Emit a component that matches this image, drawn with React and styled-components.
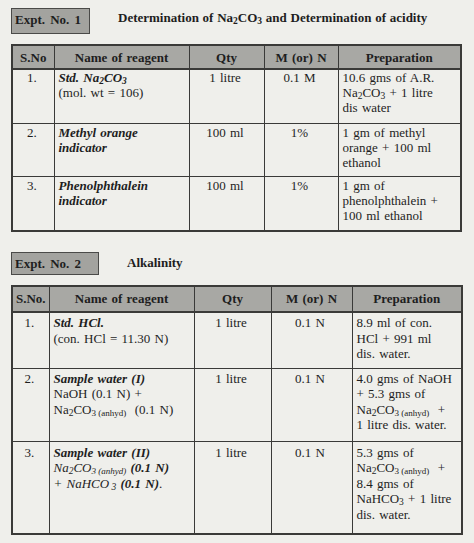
import React from "react";
import styled, { createGlobalStyle } from "styled-components";

const Global = createGlobalStyle`
  html, body { margin: 0; padding: 0; background: #efefeb; }
  body { font-family: "Liberation Serif", "Times New Roman", serif; color: #1e1e1e; }
`;

const Page = styled.div`
  width: 474px;
  height: 543px;
  box-sizing: border-box;
  padding: 8px 0 0 11px;
  background: #efefeb;
`;

const Heading = styled.div`
  display: flex;
  align-items: flex-start;
  gap: ${(p) => p.$gap}px;
  margin-top: ${(p) => p.$mt}px;
`;

const ExptBox = styled.div`
  box-sizing: border-box;
  width: ${(p) => p.$w}px;
  height: ${(p) => p.$h}px;
  background: #a3a39f;
  border: 1.5px solid #4a4a48;
  padding: ${(p) => p.$pt}px 0 0 3px;
  font-weight: bold;
  font-size: 13px;
  line-height: 15px;
  word-spacing: 2px;
`;

const Title = styled.div`
  font-weight: bold;
  font-size: 13px;
  line-height: 15px;
  padding-top: ${(p) => p.$pt}px;
  word-spacing: 0.5px;
`;

const Table = styled.table`
  border-collapse: collapse;
  table-layout: fixed;
  width: ${(p) => p.$w}px;
  margin-top: 10px;
  border: 2px solid #3a3a38;
  font-size: 13px;
  line-height: ${(p) => p.$lh}px;
  word-spacing: 1px;
`;

const Col = styled.col`
  width: ${(p) => p.$w}px;
`;

const HeadCell = styled.th`
  background: #a8a8a4;
  border: 1.5px solid #3a3a38;
  border-bottom-width: 2px;
  height: ${(p) => p.$h}px;
  padding: 0;
  font-weight: bold;
  text-align: center;
  vertical-align: middle;
  box-sizing: border-box;
`;

const Cell = styled.td`
  border: 1.5px solid #3a3a38;
  height: ${(p) => p.$h}px;
  padding: ${(p) => p.$pt}px 3px 0 ${(p) => (p.$center ? 0 : 4)}px;
  text-align: ${(p) => (p.$center ? "center" : "left")};
  vertical-align: top;
  box-sizing: border-box;
`;

const BI = styled.span`
  font-weight: bold;
  font-style: italic;
`;

const I = styled.span`
  font-style: italic;
`;

const Sub = styled.span`
  font-size: ${(p) => (p.$small ? 9 : 9.5)}px;
  line-height: 0;
  position: relative;
  top: 2px;
  word-spacing: 0;
`;

const HEAD = ["Name of reagent", "Qty", "M (or) N", "Preparation"];

function Header({ sno, h }) {
  return (
    <thead>
      <tr>
        <HeadCell $h={h}>{sno}</HeadCell>
        {HEAD.map((t) => (
          <HeadCell key={t} $h={h}>
            {t}
          </HeadCell>
        ))}
      </tr>
    </thead>
  );
}

function Row({ n, h, pt, name, qty, mn, prep }) {
  return (
    <tr>
      <Cell $h={h} $pt={pt} $center>
        {n}
      </Cell>
      <Cell $h={h} $pt={pt}>
        {name}
      </Cell>
      <Cell $h={h} $pt={pt} $center>
        {qty}
      </Cell>
      <Cell $h={h} $pt={pt} $center>
        {mn}
      </Cell>
      <Cell $h={h} $pt={pt}>
        {prep}
      </Cell>
    </tr>
  );
}

const Na2CO3 = () => (
  <>
    Na<Sub>2</Sub>CO<Sub>3</Sub>
  </>
);

export default function App() {
  return (
    <>
      <Global />
      <Page>
        <Heading $gap={28} $mt={0}>
          <ExptBox $w={79} $h={26} $pt={3}>
            Expt. No. 1
          </ExptBox>
          <Title $pt={2}>
            Determination of Na<Sub>2</Sub>CO<Sub>3</Sub> and Determination of acidity
          </Title>
        </Heading>

        <Table $w={449} $lh={15}>
          <colgroup>
            <Col $w={42} />
            <Col $w={135} />
            <Col $w={75} />
            <Col $w={74} />
            <Col $w={123} />
          </colgroup>
          <Header sno="S.No" h={24} />
          <tbody>
            <Row
              n="1."
              h={54}
              pt={0}
              name={
                <>
                  <BI>
                    Std. Na<Sub>2</Sub>CO<Sub>3</Sub>
                  </BI>
                  <br />
                  (mol. wt = 106)
                </>
              }
              qty="1 litre"
              mn="0.1 M"
              prep={
                <>
                  10.6 gms of A.R.
                  <br />
                  <Na2CO3 /> + 1 litre
                  <br />
                  dis water
                </>
              }
            />
            <Row
              n="2."
              h={53}
              pt={1}
              name={
                <BI>
                  Methyl orange
                  <br />
                  indicator
                </BI>
              }
              qty="100 ml"
              mn="1%"
              prep={
                <>
                  1 gm of methyl
                  <br />
                  orange + 100 ml
                  <br />
                  ethanol
                </>
              }
            />
            <Row
              n="3."
              h={55}
              pt={1}
              name={
                <BI>
                  Phenolphthalein
                  <br />
                  indicator
                </BI>
              }
              qty="100 ml"
              mn="1%"
              prep={
                <>
                  1 gm of
                  <br />
                  phenolphthalein +
                  <br />
                  100 ml ethanol
                </>
              }
            />
          </tbody>
        </Table>

        <Heading $gap={28} $mt={20}>
          <ExptBox $w={88} $h={23} $pt={3}>
            Expt. No. 2
          </ExptBox>
          <Title $pt={3}>Alkalinity</Title>
        </Heading>

        <Table $w={450} $lh={15.5}>
          <colgroup>
            <Col $w={37} />
            <Col $w={145} />
            <Col $w={77} />
            <Col $w={81} />
            <Col $w={110} />
          </colgroup>
          <Header sno="S.No." h={26} />
          <tbody>
            <Row
              n="1."
              h={56}
              pt={2}
              name={
                <>
                  <BI>Std. HCl.</BI>
                  <br />
                  (con. HCl = 11.30 N)
                </>
              }
              qty="1 litre"
              mn="0.1 N"
              prep={
                <>
                  8.9 ml of con.
                  <br />
                  HCl + 991 ml
                  <br />
                  dis. water.
                </>
              }
            />
            <Row
              n="2."
              h={73}
              pt={2}
              name={
                <>
                  <BI>Sample water (I)</BI>
                  <br />
                  NaOH (0.1 N) +
                  <br />
                  Na<Sub>2</Sub>CO<Sub $small>3 (anhyd)</Sub>&nbsp;&nbsp;(0.1 N)
                </>
              }
              qty="1 litre"
              mn="0.1 N"
              prep={
                <>
                  4.0 gms of NaOH
                  <br />
                  + 5.3 gms of
                  <br />
                  Na<Sub>2</Sub>CO<Sub $small>3 (anhyd)</Sub>&nbsp;&nbsp;+
                  <br />1 litre dis. water.
                </>
              }
            />
            <Row
              n="3."
              h={93}
              pt={3}
              name={
                <>
                  <BI>Sample water (II)</BI>
                  <br />
                  <I>
                    Na<Sub>2</Sub>CO<Sub $small>3 (anhyd)</Sub>
                  </I>{" "}
                  <BI>(0.1 N)</BI>
                  <br />
                  <I>
                    + NaHCO<Sub> 3</Sub>
                  </I>{" "}
                  <BI>(0.1 N)</BI>.
                </>
              }
              qty="1 litre"
              mn="0.1 N"
              prep={
                <>
                  5.3 gms of
                  <br />
                  Na<Sub>2</Sub>CO<Sub $small>3 (anhyd)</Sub>&nbsp;&nbsp;+
                  <br />
                  8.4 gms of
                  <br />
                  NaHCO<Sub>3</Sub> + 1 litre
                  <br />
                  dis. water.
                </>
              }
            />
          </tbody>
        </Table>
      </Page>
    </>
  );
}
